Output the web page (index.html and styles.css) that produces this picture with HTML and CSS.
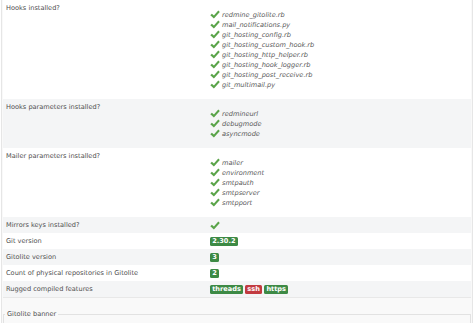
FILE: index.html
```html
<!DOCTYPE html>
<html>
<head>
  <title>Gitolite settings</title>
  <link rel="stylesheet" href="styles.css">
</head>
<body>
  <div class="box">
    <table class="list">
      <colgroup>
        <col class="label-col">
        <col>
      </colgroup>
      <tr class="even">
        <td class="label">Hooks installed?</td>
        <td>
          <ul class="checks">
            <li><svg class="ok" viewBox="0 0 10 9"><path d="M0.3 5.2 L1.9 3.7 L3.9 5.6 L8.3 0.6 L9.8 2.1 L3.9 8.4 Z"/></svg>redmine_gitolite.rb</li>
            <li><svg class="ok" viewBox="0 0 10 9"><path d="M0.3 5.2 L1.9 3.7 L3.9 5.6 L8.3 0.6 L9.8 2.1 L3.9 8.4 Z"/></svg>mail_notifications.py</li>
            <li><svg class="ok" viewBox="0 0 10 9"><path d="M0.3 5.2 L1.9 3.7 L3.9 5.6 L8.3 0.6 L9.8 2.1 L3.9 8.4 Z"/></svg>git_hosting_config.rb</li>
            <li><svg class="ok" viewBox="0 0 10 9"><path d="M0.3 5.2 L1.9 3.7 L3.9 5.6 L8.3 0.6 L9.8 2.1 L3.9 8.4 Z"/></svg>git_hosting_custom_hook.rb</li>
            <li><svg class="ok" viewBox="0 0 10 9"><path d="M0.3 5.2 L1.9 3.7 L3.9 5.6 L8.3 0.6 L9.8 2.1 L3.9 8.4 Z"/></svg>git_hosting_http_helper.rb</li>
            <li><svg class="ok" viewBox="0 0 10 9"><path d="M0.3 5.2 L1.9 3.7 L3.9 5.6 L8.3 0.6 L9.8 2.1 L3.9 8.4 Z"/></svg>git_hosting_hook_logger.rb</li>
            <li><svg class="ok" viewBox="0 0 10 9"><path d="M0.3 5.2 L1.9 3.7 L3.9 5.6 L8.3 0.6 L9.8 2.1 L3.9 8.4 Z"/></svg>git_hosting_post_receive.rb</li>
            <li><svg class="ok" viewBox="0 0 10 9"><path d="M0.3 5.2 L1.9 3.7 L3.9 5.6 L8.3 0.6 L9.8 2.1 L3.9 8.4 Z"/></svg>git_multimail.py</li>
          </ul>
        </td>
      </tr>
      <tr class="odd">
        <td class="label">Hooks parameters installed?</td>
        <td>
          <ul class="checks">
            <li><svg class="ok" viewBox="0 0 10 9"><path d="M0.3 5.2 L1.9 3.7 L3.9 5.6 L8.3 0.6 L9.8 2.1 L3.9 8.4 Z"/></svg>redmineurl</li>
            <li><svg class="ok" viewBox="0 0 10 9"><path d="M0.3 5.2 L1.9 3.7 L3.9 5.6 L8.3 0.6 L9.8 2.1 L3.9 8.4 Z"/></svg>debugmode</li>
            <li><svg class="ok" viewBox="0 0 10 9"><path d="M0.3 5.2 L1.9 3.7 L3.9 5.6 L8.3 0.6 L9.8 2.1 L3.9 8.4 Z"/></svg>asyncmode</li>
          </ul>
        </td>
      </tr>
      <tr class="even">
        <td class="label">Mailer parameters installed?</td>
        <td>
          <ul class="checks">
            <li><svg class="ok" viewBox="0 0 10 9"><path d="M0.3 5.2 L1.9 3.7 L3.9 5.6 L8.3 0.6 L9.8 2.1 L3.9 8.4 Z"/></svg>mailer</li>
            <li><svg class="ok" viewBox="0 0 10 9"><path d="M0.3 5.2 L1.9 3.7 L3.9 5.6 L8.3 0.6 L9.8 2.1 L3.9 8.4 Z"/></svg>environment</li>
            <li><svg class="ok" viewBox="0 0 10 9"><path d="M0.3 5.2 L1.9 3.7 L3.9 5.6 L8.3 0.6 L9.8 2.1 L3.9 8.4 Z"/></svg>smtpauth</li>
            <li><svg class="ok" viewBox="0 0 10 9"><path d="M0.3 5.2 L1.9 3.7 L3.9 5.6 L8.3 0.6 L9.8 2.1 L3.9 8.4 Z"/></svg>smtpserver</li>
            <li><svg class="ok" viewBox="0 0 10 9"><path d="M0.3 5.2 L1.9 3.7 L3.9 5.6 L8.3 0.6 L9.8 2.1 L3.9 8.4 Z"/></svg>smtpport</li>
          </ul>
        </td>
      </tr>
      <tr class="odd">
        <td class="label">Mirrors keys installed?</td>
        <td><svg class="ok" viewBox="0 0 10 9"><path d="M0.3 5.2 L1.9 3.7 L3.9 5.6 L8.3 0.6 L9.8 2.1 L3.9 8.4 Z"/></svg></td>
      </tr>
      <tr class="even">
        <td class="label">Git version</td>
        <td><span class="badge green">2.30.2</span></td>
      </tr>
      <tr class="odd">
        <td class="label">Gitolite version</td>
        <td><span class="badge green">3</span></td>
      </tr>
      <tr class="even">
        <td class="label">Count of physical repositories in Gitolite</td>
        <td><span class="badge green">2</span></td>
      </tr>
      <tr class="odd">
        <td class="label">Rugged compiled features</td>
        <td>
          <span class="badge green">threads</span>
          <span class="badge red">ssh</span>
          <span class="badge green">https</span>
        </td>
      </tr>
    </table>
    <fieldset class="banner">
      <legend>Gitolite banner</legend>
    </fieldset>
  </div>
</body>
</html>
```

FILE: styles.css
```css
html, body {
  margin: 0;
  background-color: #fff;
  font-family: "DejaVu Sans", Verdana, sans-serif;
  font-size: 6.6px;
  color: #505050;
}
.box {
  margin: 0 1px;
  padding: 0 1px 20px;
  background-color: #f9f9f9;
  border-left: 1px solid #e6e6e6;
  border-right: 1px solid #e6e6e6;
}
.list {
  width: 100%;
  table-layout: fixed;
  border-collapse: collapse;
  border-bottom: 1px solid #e8e8e8;
}
.label-col {
  width: 204px;
}
.list td {
  padding: 3px;
  line-height: 10px;
  vertical-align: middle;
}
.list td.label {
  vertical-align: top;
}
tr.even {
  background-color: #fff;
}
tr.odd {
  background-color: #f4f5f6;
}
.checks {
  list-style: none;
  margin: 6.5px 0;
  padding: 0;
}
.checks li {
  display: flex;
  align-items: center;
  height: 10px;
  font-style: italic;
  color: #585858;
}
.ok {
  width: 10px;
  height: 9px;
  fill: #5aa449;
  margin-right: 2px;
  flex-shrink: 0;
  vertical-align: middle;
}
.badge {
  display: inline-block;
  padding: 0 2.2px;
  line-height: 9px;
  border-radius: 1.5px;
  font-weight: bold;
  color: #fff;
  vertical-align: middle;
}
.green {
  background-color: #3d8a45;
}
.red {
  background-color: #c23b40;
}
.banner {
  margin: 11px 0 0;
  padding: 0 1px;
  border: 1px solid #e2e2e2;
  height: 20px;
}
.banner legend {
  padding: 0 2px;
  line-height: 10px;
}
```
